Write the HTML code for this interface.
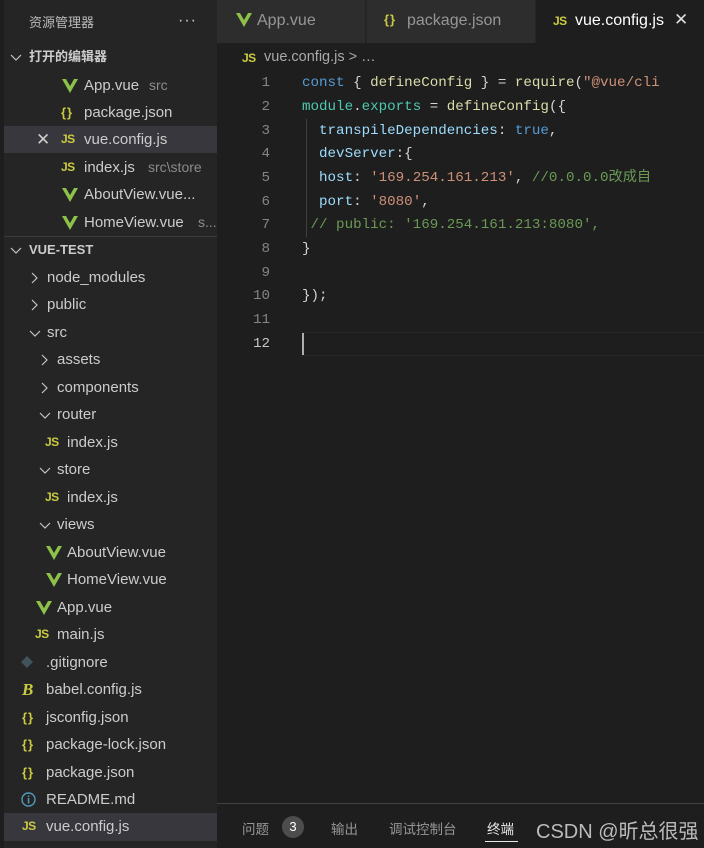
<!DOCTYPE html>
<html><head><meta charset="utf-8"><style>
*{margin:0;padding:0;box-sizing:border-box}
body{width:704px;height:848px;overflow:hidden;background:#1e1e1e;font-family:"Liberation Sans","Noto Sans CJK SC",sans-serif;color:#ccc;position:relative}
.a{position:absolute;white-space:nowrap}
#side{position:absolute;left:4px;top:0;width:213px;height:848px;background:#252526}
.row{position:absolute;left:0;width:213px;height:27px;font-size:15px;line-height:27px;color:#ccc}
.row span,.row svg{position:absolute;white-space:nowrap}
.d{color:#8b8b8b;font-size:14px}
.js{font-weight:bold;color:#cbcb41;font-size:12px;letter-spacing:-0.5px}
.br{color:#cbcb41;font-weight:bold;font-size:13px;letter-spacing:1px}
.code{position:absolute;left:302px;font-family:"Liberation Mono","Noto Sans CJK SC",monospace;font-size:14.2px;white-space:pre;color:#d4d4d4;height:24px;line-height:24px}
.ln{position:absolute;width:54px;left:216px;text-align:right;font-family:"Liberation Mono",monospace;font-size:14.2px;color:#858585;line-height:24px}
.k{color:#569cd6}.v{color:#9cdcfe}.s{color:#ce9178}.c{color:#6a9955}.f{color:#dcdcaa}.t{color:#4ec9b0}
</style></head><body>
<svg width="0" height="0" style="position:absolute"><defs>
<g id="vue"><path d="M0 0h4l4 7 4-7h4L8 14z" fill="#8dc149"/><path d="M4 0h3l1 2 1-2h3L8 7z" fill="#252526" opacity=".35"/></g>
<g id="cr"><path d="M4 2l5 5-5 5" fill="none" stroke="#c5c5c5" stroke-width="1.2"/></g>
<g id="cd"><path d="M2 5l5 5 5-5" fill="none" stroke="#c5c5c5" stroke-width="1.2"/></g>
</defs></svg>
<div id="side">
<div class="a" style="left:25px;top:12px;font-size:13px;color:#bbb">资源管理器</div>
<div class="a" style="left:174px;top:12px;font-size:16px;color:#ccc;letter-spacing:1px">···</div>
<div class="row" style="top:43px;font-weight:bold;font-size:13px"><svg style="left:5px;top:7px" width="14" height="14"><use href="#cd"/></svg><span style="left:25px">打开的编辑器</span></div>
<div class="row" style="top:72px"><svg style="left:58px;top:7px" width="16" height="14"><use href="#vue"/></svg><span style="left:80px">App.vue</span><span class="d" style="left:145px">src</span></div>
<div class="row" style="top:99px"><span class="br" style="left:57px">{}</span><span style="left:80px">package.json</span></div>
<div class="row" style="top:126px;background:#37373d"><span style="left:32px;font-size:17px;color:#ccc">✕</span><span class="js" style="left:57px">JS</span><span style="left:80px">vue.config.js</span></div>
<div class="row" style="top:154px"><span class="js" style="left:57px">JS</span><span style="left:80px">index.js</span><span class="d" style="left:144px">src\store</span></div>
<div class="row" style="top:181px"><svg style="left:58px;top:7px" width="16" height="14"><use href="#vue"/></svg><span style="left:80px">AboutView.vue...</span></div>
<div class="row" style="top:209px"><svg style="left:58px;top:7px" width="16" height="14"><use href="#vue"/></svg><span style="left:80px">HomeView.vue</span><span class="d" style="left:194px">s...</span></div>
<div class="a" style="left:0;top:236px;width:213px;height:1px;background:#3c3c3c"></div>
<div class="row" style="top:236px;font-weight:bold;font-size:13px"><svg style="left:5px;top:7px" width="14" height="14"><use href="#cd"/></svg><span style="left:25px">VUE-TEST</span></div>
<div class="row" style="top:264px"><svg style="left:24px;top:7px" width="14" height="14"><use href="#cr"/></svg><span style="left:43px">node_modules</span></div>
<div class="row" style="top:291px"><svg style="left:24px;top:7px" width="14" height="14"><use href="#cr"/></svg><span style="left:43px">public</span></div>
<div class="row" style="top:319px"><svg style="left:24px;top:7px" width="14" height="14"><use href="#cd"/></svg><span style="left:43px">src</span></div>
<div class="row" style="top:346px"><svg style="left:34px;top:7px" width="14" height="14"><use href="#cr"/></svg><span style="left:53px">assets</span></div>
<div class="row" style="top:374px"><svg style="left:34px;top:7px" width="14" height="14"><use href="#cr"/></svg><span style="left:53px">components</span></div>
<div class="row" style="top:401px"><svg style="left:34px;top:7px" width="14" height="14"><use href="#cd"/></svg><span style="left:53px">router</span></div>
<div class="row" style="top:429px"><span class="js" style="left:41px">JS</span><span style="left:63px">index.js</span></div>
<div class="row" style="top:456px"><svg style="left:34px;top:7px" width="14" height="14"><use href="#cd"/></svg><span style="left:53px">store</span></div>
<div class="row" style="top:484px"><span class="js" style="left:41px">JS</span><span style="left:63px">index.js</span></div>
<div class="row" style="top:511px"><svg style="left:34px;top:7px" width="14" height="14"><use href="#cd"/></svg><span style="left:53px">views</span></div>
<div class="row" style="top:539px"><svg style="left:42px;top:7px" width="16" height="14"><use href="#vue"/></svg><span style="left:63px">AboutView.vue</span></div>
<div class="row" style="top:566px"><svg style="left:42px;top:7px" width="16" height="14"><use href="#vue"/></svg><span style="left:63px">HomeView.vue</span></div>
<div class="row" style="top:594px"><svg style="left:32px;top:7px" width="16" height="14"><use href="#vue"/></svg><span style="left:53px">App.vue</span></div>
<div class="row" style="top:621px"><span class="js" style="left:31px">JS</span><span style="left:53px">main.js</span></div>
<div class="row" style="top:649px"><svg style="left:17px;top:7px" width="12" height="12"><path d="M6 0L12 6L6 12L0 6z" fill="#41535b"/></svg><span style="left:42px">.gitignore</span></div>
<div class="row" style="top:676px"><span style="left:18px;color:#cbcb41;font-style:italic;font-weight:bold;font-family:'Liberation Serif',serif;font-size:17px">B</span><span style="left:42px">babel.config.js</span></div>
<div class="row" style="top:704px"><span class="br" style="left:18px">{}</span><span style="left:42px">jsconfig.json</span></div>
<div class="row" style="top:731px"><span class="br" style="left:18px">{}</span><span style="left:42px">package-lock.json</span></div>
<div class="row" style="top:759px"><span class="br" style="left:18px">{}</span><span style="left:42px">package.json</span></div>
<div class="row" style="top:786px"><svg style="left:17px;top:6px" width="15" height="15"><circle cx="7.5" cy="7.5" r="6.5" fill="none" stroke="#519aba" stroke-width="1.4"/><rect x="6.8" y="6" width="1.5" height="5.5" fill="#519aba"/><rect x="6.8" y="3.5" width="1.5" height="1.5" fill="#519aba"/></svg><span style="left:42px">README.md</span></div>
<div class="row" style="top:813px;height:28px;background:#37373d"><span class="js" style="left:18px">JS</span><span style="left:42px">vue.config.js</span></div>
</div>
<!-- tabs -->
<div class="a" style="left:217px;top:0;width:487px;height:43px;background:#252526"></div>
<div class="a" style="left:217px;top:0;width:149px;height:43px;background:#2d2d2d;border-right:1px solid #252526"></div>
<svg class="a" style="left:236px;top:13px" width="16" height="14"><use href="#vue"/></svg>
<div class="a" style="left:257px;top:12px;font-size:16px;color:#969696">App.vue</div>
<div class="a" style="left:367px;top:0;width:168px;height:43px;background:#2d2d2d"></div>
<div class="a br" style="left:384px;top:12px">{}</div>
<div class="a" style="left:407px;top:12px;font-size:16px;color:#969696">package.json</div>
<div class="a" style="left:536px;top:0;width:168px;height:43px;background:#1e1e1e"></div>
<div class="a js" style="left:553px;top:14px">JS</div>
<div class="a" style="left:575px;top:12px;font-size:16px;color:#fff">vue.config.js</div>
<div class="a" style="left:674px;top:10px;font-size:17px;color:#ddd">✕</div>
<!-- breadcrumb -->
<div class="a js" style="left:242px;top:51px">JS</div>
<div class="a" style="left:264px;top:49px;font-size:14.5px;color:#a9a9a9">vue.config.js &gt; …</div>
<!-- lines -->
<div class="ln" style="top:71px">1</div><div class="ln" style="top:95px">2</div><div class="ln" style="top:119px">3</div><div class="ln" style="top:142px">4</div><div class="ln" style="top:166px">5</div><div class="ln" style="top:190px">6</div><div class="ln" style="top:213px">7</div><div class="ln" style="top:237px">8</div><div class="ln" style="top:261px">9</div><div class="ln" style="top:284px">10</div><div class="ln" style="top:308px">11</div><div class="ln" style="top:332px;color:#c6c6c6">12</div>
<div class="a" style="left:306px;top:119px;width:1px;height:118px;background:#404040"></div>
<div class="a" style="left:302px;top:332px;width:402px;height:24px;border-top:1px solid #282828;border-bottom:1px solid #282828"></div>
<div class="a" style="left:302px;top:333px;width:2px;height:22px;background:#aeafad"></div>
<div class="code" style="top:71px"><span class="k">const</span> { <span class="f">defineConfig</span> } = <span class="f">require</span>(<span class="s">"@vue/cli</span></div>
<div class="code" style="top:95px"><span class="t">module</span>.<span class="t">exports</span> = <span class="f">defineConfig</span>({</div>
<div class="code" style="top:119px">  <span class="v">transpileDependencies</span>: <span class="k">true</span>,</div>
<div class="code" style="top:142px">  <span class="v">devServer</span>:{</div>
<div class="code" style="top:166px">  <span class="v">host</span>: <span class="s">'169.254.161.213'</span>, <span class="c">//0.0.0.0改成自</span></div>
<div class="code" style="top:190px">  <span class="v">port</span>: <span class="s">'8080'</span>,</div>
<div class="code" style="top:213px"> <span class="c">// public: '169.254.161.213:8080',</span></div>
<div class="code" style="top:237px">}</div>
<div class="code" style="top:284px">});</div>
<!-- panel -->
<div class="a" style="left:217px;top:803px;width:487px;height:1px;background:#414141"></div>
<div class="a" style="left:242px;top:818px;font-size:13.5px;color:#969696">问题</div>
<div class="a" style="left:282px;top:816px;width:22px;height:22px;border-radius:11px;background:#4d4d4d;color:#fff;font-size:13px;text-align:center;line-height:22px">3</div>
<div class="a" style="left:331px;top:818px;font-size:13.5px;color:#969696">输出</div>
<div class="a" style="left:389px;top:818px;font-size:13.5px;color:#969696">调试控制台</div>
<div class="a" style="left:487px;top:818px;font-size:13.5px;color:#e7e7e7">终端</div>
<div class="a" style="left:485px;top:841px;width:33px;height:1px;background:#e7e7e7"></div>
<div class="a" style="left:536px;top:815px;font-size:20px;color:#bbb">CSDN @昕总很强</div>
</body></html>
